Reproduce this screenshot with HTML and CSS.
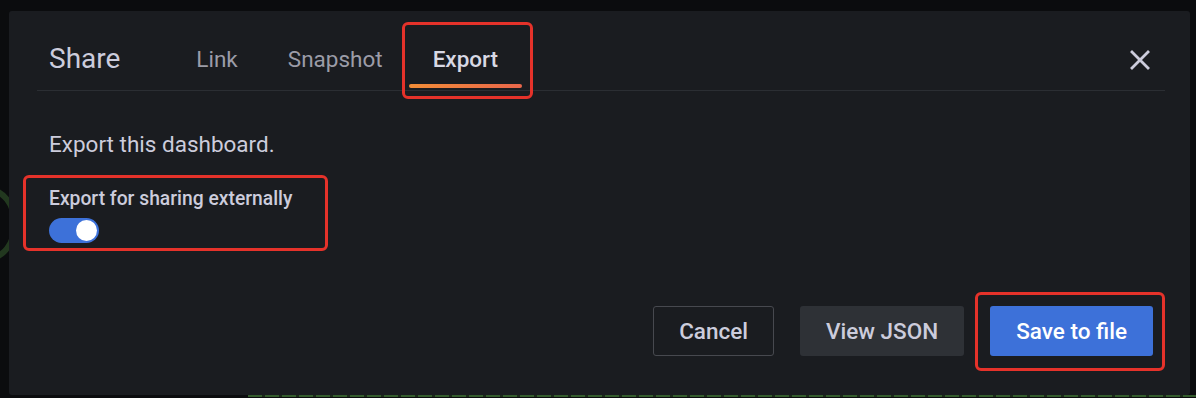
FILE: index.html
```html
<!DOCTYPE html>
<html lang="en">
<head>
    <meta charset="UTF-8">
    <title>Share dashboard</title>
    <link rel="stylesheet" href="styles.css">
</head>
<body>
    <div class="backdrop-arc"></div>
    <div class="backdrop-line"></div>

    <div class="modal">
        <div class="modal-header">
            <h2 class="modal-title">Share</h2>
            <div class="tabs">
                <div class="tab">Link</div>
                <div class="tab">Snapshot</div>
                <div class="tab active">Export</div>
            </div>
            <button class="close-btn" aria-label="Close">
                <svg width="20" height="20" viewBox="0 0 20 20">
                    <path d="M2 2 L18 18 M18 2 L2 18" stroke="#ccccdc" stroke-width="2.8" stroke-linecap="square"/>
                </svg>
            </button>
        </div>

        <div class="modal-body">
            <p class="intro">Export this dashboard.</p>
            <div class="field">
                <label class="field-label">Export for sharing externally</label>
                <div class="switch on"><span class="knob"></span></div>
            </div>
        </div>

        <div class="modal-footer">
            <button class="btn btn-outline">Cancel</button>
            <button class="btn btn-secondary">View JSON</button>
            <button class="btn btn-primary">Save to file</button>
        </div>
    </div>

    <!-- annotation boxes -->
    <div class="mark mark-tab"></div>
    <div class="mark mark-toggle"></div>
    <div class="mark mark-save"></div>
</body>
</html>
```

FILE: styles.css
```css
body {
    margin: 0;
    width: 1196px;
    height: 398px;
    background-color: #0b0c0e;
    font-family: Roboto, "Liberation Sans", sans-serif;
    color: #ccccdc;
    overflow: hidden;
    position: relative;
}
.backdrop-arc {
    position: absolute;
    left: -44px;
    top: 186px;
    width: 50px;
    height: 64px;
    border-radius: 50%;
    border: 6px solid #22381f;
}
.backdrop-line {
    position: absolute;
    left: 248px;
    right: 0;
    top: 395px;
    height: 2px;
    background: repeating-linear-gradient(90deg, #345c2d 0 14px, #1b2a19 14px 17px);
}
.modal {
    position: relative;
    margin: 11px 0 0 9px;
    width: 1181px;
    height: 384px;
    background-color: #1a1c20;
    border-radius: 3px;
    display: flex;
    flex-direction: column;
}
.modal-header {
    display: flex;
    align-items: stretch;
    height: 63px;
    padding-top: 16px;
    margin: 0 25px 0 28px;
    border-bottom: 1px solid #2b2e33;
}
.modal-title {
    margin: 0 52px 0 12px;
    font-size: 28px;
    font-weight: 400;
    line-height: 63px;
    color: #ccccdc;
}
.tabs {
    display: flex;
    gap: 2px;
}
.tab {
    position: relative;
    padding: 2px 24px 0;
    font-size: 22.5px;
    line-height: 61px;
    color: #9c9ca8;
}
.tab.active {
    color: #d8d8e4;
    font-weight: 500;
}
.tab.active::after {
    content: "";
    position: absolute;
    left: 0;
    right: 0;
    bottom: 2px;
    height: 4px;
    border-radius: 3px;
    background: linear-gradient(90deg, #f38d37, #e9664b);
}
.close-btn {
    margin: 0 15px 0 auto;
    padding: 0;
    background: none;
    border: none;
    display: flex;
    align-items: center;
    cursor: pointer;
}
.close-btn svg {
    margin-top: 2px;
}
.modal-body {
    padding: 38px 40px 0;
}
.intro {
    margin: 0;
    font-size: 22.5px;
    line-height: 31px;
}
.field {
    margin-top: 25px;
}
.field-label {
    display: block;
    font-size: 19.3px;
    font-weight: 500;
    line-height: 27px;
    color: #ccccdc;
}
.switch {
    margin-top: 6px;
    width: 50px;
    height: 25px;
    border-radius: 13px;
    background-color: #3d71d9;
    display: flex;
    align-items: center;
    justify-content: flex-end;
}
.knob {
    width: 21px;
    height: 21px;
    margin-right: 2px;
    border-radius: 50%;
    background-color: #fff;
}
.modal-footer {
    margin-top: auto;
    display: flex;
    justify-content: flex-end;
    gap: 26px;
    padding: 0 37px 39px 0;
}
.btn {
    height: 50px;
    padding: 0 25px;
    font-family: Roboto, "Liberation Sans", sans-serif;
    font-size: 22.5px;
    font-weight: 500;
    border-radius: 3px;
    border: 1px solid transparent;
    cursor: pointer;
}
.btn-outline {
    background: transparent;
    border-color: #47494f;
    color: #ccccdc;
}
.btn-secondary {
    background-color: #2e3136;
    color: #ccccdc;
}
.btn-primary {
    background-color: #3d71d9;
    color: #fff;
}
.mark {
    position: absolute;
    border: 3px solid #e5322a;
    border-radius: 6px;
}
.mark-tab {
    left: 402px;
    top: 22px;
    width: 125px;
    height: 71px;
}
.mark-toggle {
    left: 23px;
    top: 175px;
    width: 299px;
    height: 70px;
}
.mark-save {
    left: 975px;
    top: 292px;
    width: 184px;
    height: 73px;
}
```
